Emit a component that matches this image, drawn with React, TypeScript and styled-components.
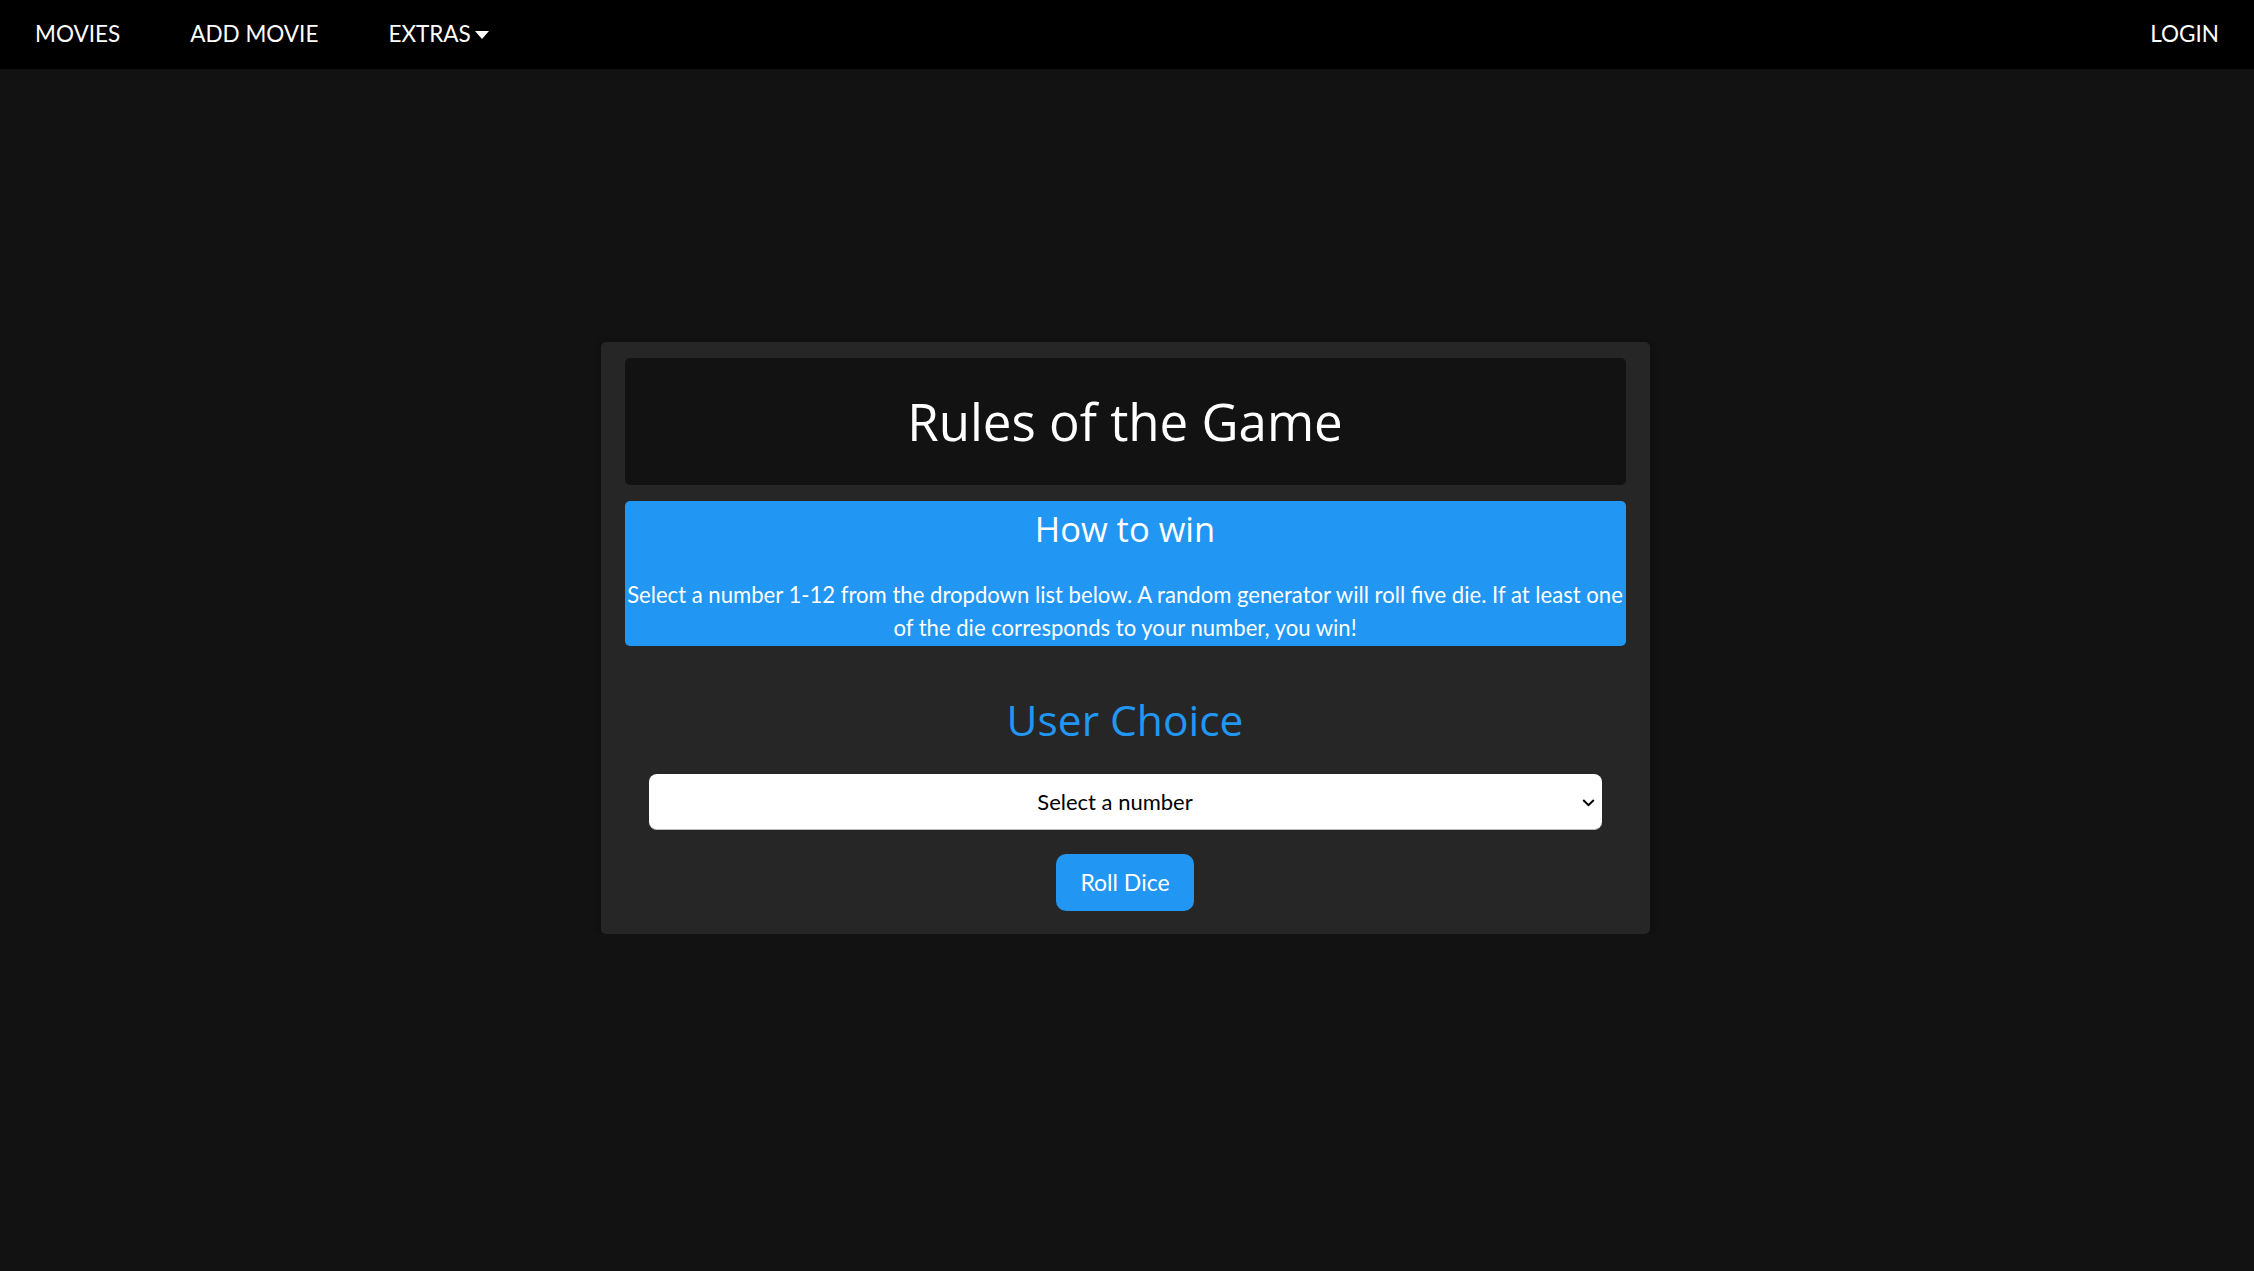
import React from 'react'
import styled, { createGlobalStyle } from 'styled-components'

const GlobalStyle = createGlobalStyle`
	html, body {
		margin: 0;
		padding: 0;
		background: #121212;
		font-family: Lato, 'Noto Sans', sans-serif;
		color: #fff;
	}
`

const NavBar = styled.nav`
	display: flex;
	align-items: center;
	height: 69px;
	background: #000;
`

const NavItem = styled.a<{ $right?: boolean }>`
	display: flex;
	align-items: center;
	padding: 0 35px;
	margin-top: -2px;
	margin-left: ${({ $right }) => ($right ? 'auto' : '0')};
	font-family: Lato, sans-serif;
	font-size: 22.5px;
	color: #fff;
	text-decoration: none;
	cursor: pointer;
`

const Caret = styled.span`
	display: inline-block;
	margin-left: 4px;
	margin-top: 2px;
	width: 0;
	height: 0;
	border-left: 7px solid transparent;
	border-right: 7px solid transparent;
	border-top: 8px solid #fff;
`

const Card = styled.section`
	width: 1049px;
	box-sizing: border-box;
	margin: 273px auto 0;
	padding: 16px 24px 23px;
	background: #262626;
	border-radius: 5px;
	box-shadow: 0 2px 5px 0 rgba(0, 0, 0, 0.16), 0 2px 10px 0 rgba(0, 0, 0, 0.12);
	display: flex;
	flex-direction: column;
	align-items: stretch;
	transform: translateX(-2px);
`

const TitleBox = styled.header`
	height: 127px;
	display: flex;
	align-items: center;
	justify-content: center;
	background: #121212;
	border-radius: 5px;
`

const Title = styled.h1`
	margin: 0;
	font-family: 'Open Sans', 'Noto Sans', sans-serif;
	font-weight: 400;
	font-size: 51px;
	line-height: 1;
	color: #fff;
`

const RulesBox = styled.div`
	margin-top: 16px;
	padding: 4px 0 2px;
	background: #2196f3;
	border-radius: 5px;
	text-align: center;
`

const Heading = styled.h2<{ $size: number; $color?: string }>`
	margin: 0;
	font-family: 'Open Sans', 'Noto Sans', sans-serif;
	font-weight: 400;
	font-size: ${({ $size }) => $size}px;
	line-height: 1.362;
	color: ${({ $color }) => $color || '#fff'};
	text-align: center;
`

const RulesText = styled.p`
	margin: 26px 0 0;
	font-size: 22.1px;
	line-height: 33px;
	color: #fff;
`

const ChoiceHeading = styled(Heading)`
	margin-top: 45px;
`

const SelectWrap = styled.div`
	position: relative;
	margin: 25px 24px 0;
`

const Select = styled.select`
	display: block;
	width: 100%;
	height: 56px;
	padding: 0 34px 0 14px;
	appearance: none;
	background: #fff;
	color: #000;
	border: none;
	border-bottom: 1px solid #bbb;
	border-radius: 8px;
	font-family: Lato, sans-serif;
	font-size: 22px;
	text-align: center;
	text-align-last: center;
	outline: none;
`

const Chevron = styled.svg`
	position: absolute;
	right: 7px;
	top: 50%;
	width: 13px;
	height: 8px;
	transform: translateY(-40%);
	pointer-events: none;
`

const RollButton = styled.button`
	align-self: center;
	margin-top: 24px;
	height: 57px;
	padding: 0 24px;
	background: #2196f3;
	color: #fff;
	border: none;
	border-radius: 10px;
	font-family: Lato, sans-serif;
	font-size: 23px;
	cursor: pointer;
`

const App = () => {
	return (
		<>
			<GlobalStyle />
			<NavBar>
				<NavItem>MOVIES</NavItem>
				<NavItem>ADD MOVIE</NavItem>
				<NavItem>
					EXTRAS
					<Caret />
				</NavItem>
				<NavItem $right>LOGIN</NavItem>
			</NavBar>
			<Card>
				<TitleBox>
					<Title>Rules of the Game</Title>
				</TitleBox>
				<RulesBox>
					<Heading $size={34.5}>How to win</Heading>
					<RulesText>
						Select a number 1-12 from the dropdown list below. A random
						generator will roll five die. If at least one of the die
						corresponds to your number, you win!
					</RulesText>
				</RulesBox>
				<ChoiceHeading as='h2' $size={42.5} $color='#2196f3'>
					User Choice
				</ChoiceHeading>
				<SelectWrap>
					<Select defaultValue=''>
						<option value='' disabled>
							Select a number
						</option>
						{Array.from({ length: 12 }, (_, i) => (
							<option key={i} value={i + 1}>
								{i + 1}
							</option>
						))}
					</Select>
					<Chevron viewBox='0 0 13 8'>
						<path
							d='M1.2 1.2 L6.5 6.3 L11.8 1.2'
							fill='none'
							stroke='#000'
							strokeWidth='2'
						/>
					</Chevron>
				</SelectWrap>
				<RollButton>Roll Dice</RollButton>
			</Card>
		</>
	)
}

export default App
